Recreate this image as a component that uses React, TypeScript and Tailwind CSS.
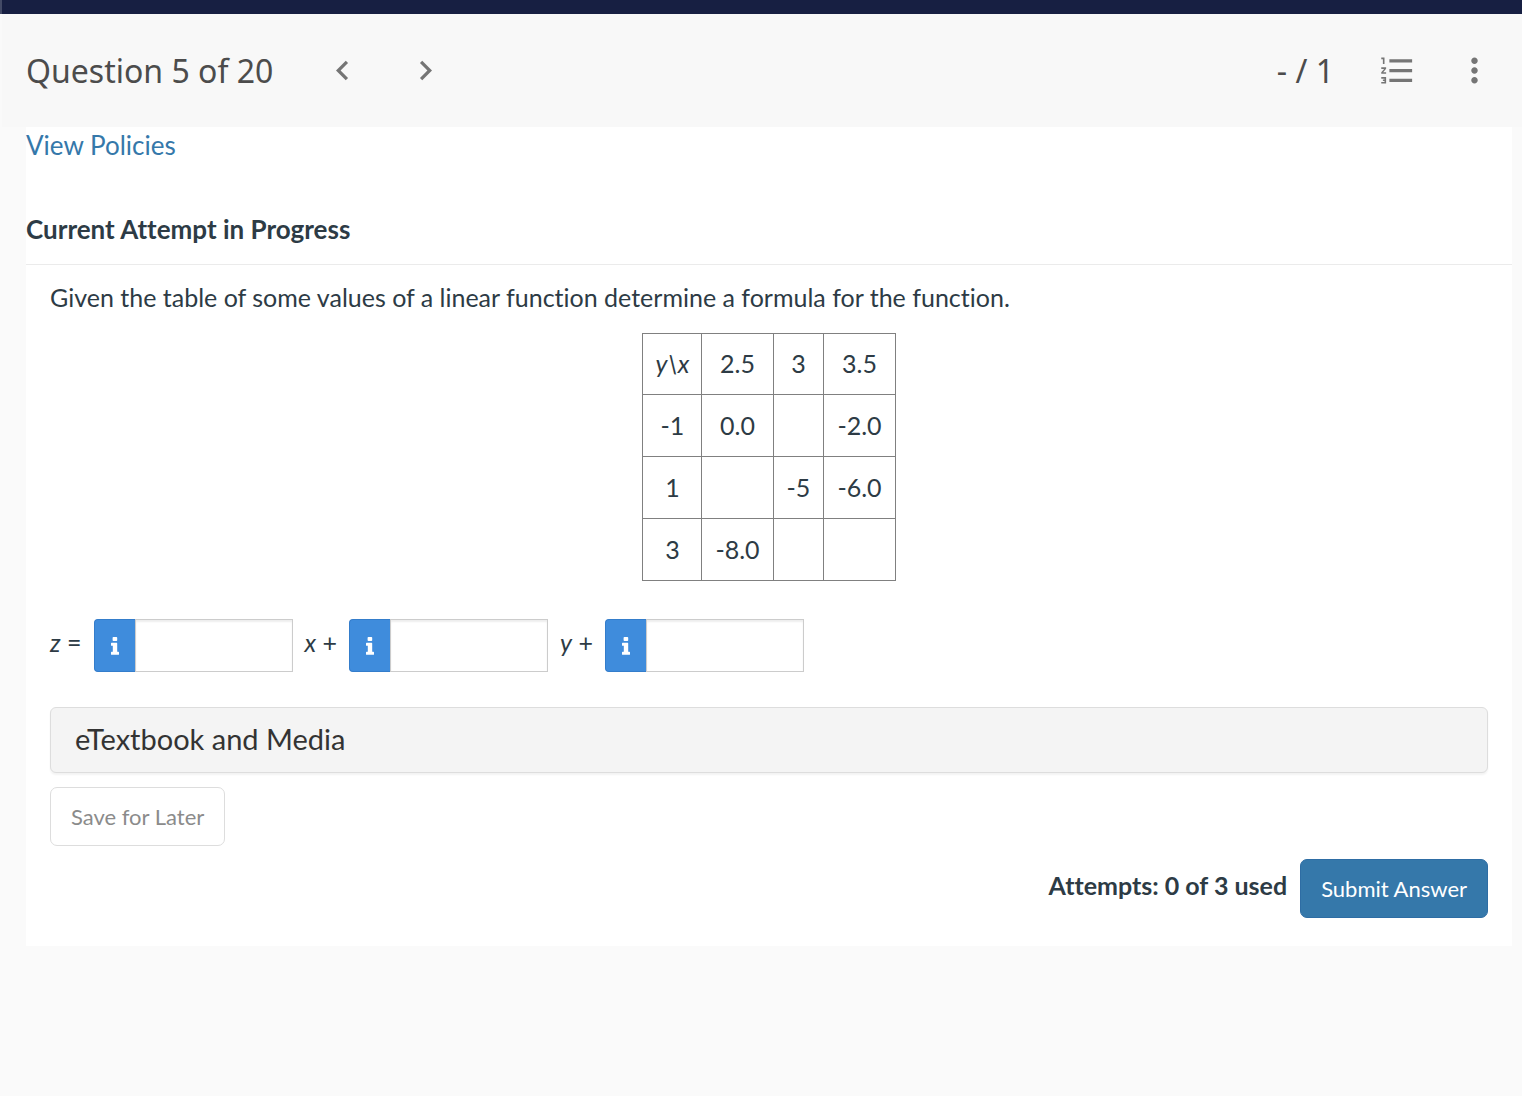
import React from 'react';

type Cell = string | null;

const columns = ['2.5', '3', '3.5'];

const rows: { y: string; values: Cell[] }[] = [
  { y: '-1', values: ['0.0', null, '-2.0'] },
  { y: '1', values: [null, '-5', '-6.0'] },
  { y: '3', values: ['-8.0', null, null] },
];

const Icon: React.FC<{ path: string }> = ({ path }) => (
  <svg className="size-[39px] fill-[#757575]" viewBox="0 0 24 24" aria-hidden="true">
    <path d={path} />
  </svg>
);

const QuestionHeader = () => (
  <header className="flex h-[113px] items-center justify-between border-l-2 border-[#fafafa] bg-[#f8f8f8] pl-6 pr-7 font-['Noto_Sans',sans-serif] text-[32px] leading-10 text-[#4c4c4c]">
    <div className="flex items-center">
      <h1>Question 5 of 20</h1>
      <nav className="ml-[50px] flex gap-11">
        <button type="button" aria-label="Previous question">
          <Icon path="M15.41 7.41L14 6l-6 6 6 6 1.41-1.41L10.83 12z" />
        </button>
        <button type="button" aria-label="Next question">
          <Icon path="M10 6L8.59 7.41 13.17 12l-4.58 4.59L10 18l6-6z" />
        </button>
      </nav>
    </div>
    <div className="flex items-center">
      <span>- / 1</span>
      <button type="button" aria-label="Question list" className="ml-11">
        <Icon path="M2 17h2v.5H3v1h1v.5H2v1h3v-4H2v1zm1-9h1V4H2v1h1v3zm-1 3h1.8L2 13.1v.9h3v-1H3.2L5 10.9V10H2v1zm5-6v2h14V5H7zm0 14h14v-2H7v2zm0-6h14v-2H7v2z" />
      </button>
      <button type="button" aria-label="More options" className="ml-[38px]">
        <Icon path="M12 8c1.1 0 2-.9 2-2s-.9-2-2-2-2 .9-2 2 .9 2 2 2zm0 2c-1.1 0-2 .9-2 2s.9 2 2 2 2-.9 2-2-.9-2-2-2zm0 6c-1.1 0-2 .9-2 2s.9 2 2 2 2-.9 2-2-.9-2-2-2z" />
      </button>
    </div>
  </header>
);

const ValuesTable = () => (
  <table className="mx-auto mt-[18px] border-collapse text-center">
    <thead>
      <tr>
        <th className="h-[61px] border border-[#808080] px-3 pb-0.5 font-normal italic">y\x</th>
        {columns.map(x => (
          <th key={x} className="h-[61px] border border-[#808080] px-[13px] pb-0.5 font-normal">
            {x}
          </th>
        ))}
      </tr>
    </thead>
    <tbody>
      {rows.map(row => (
        <tr key={row.y}>
          <th className="h-[62px] border border-[#808080] px-[13px] pb-0.5 font-normal">{row.y}</th>
          {row.values.map((value, i) => (
            <td key={i} className="h-[62px] border border-[#808080] px-[13px] pb-0.5">
              {value}
            </td>
          ))}
        </tr>
      ))}
    </tbody>
  </table>
);

const AnswerInput: React.FC<{ label: string }> = ({ label }) => (
  <span className="flex h-[53px]">
    <button
      type="button"
      aria-label={`Hint for ${label}`}
      className="flex w-[41px] items-center justify-center rounded-l-[4px] border border-r-0 border-[#347dcb] bg-[#3f8cdc]"
    >
      <svg className="h-[18px] w-2 fill-white" viewBox="0 0 8 18" aria-hidden="true">
        <rect x="1.6" y="0" width="4.6" height="4" rx="0.8" />
        <path d="M0.6 5.8h5a.6.6 0 0 1 .6.6v8.4h1.2a.6.6 0 0 1 .6.6v1.8a.6.6 0 0 1-.6.6H.6a.6.6 0 0 1-.6-.6v-1.8a.6.6 0 0 1 .6-.6h1.2V8.8H.6a.6.6 0 0 1-.6-.6V6.4a.6.6 0 0 1 .6-.6z" />
      </svg>
    </button>
    <input
      type="text"
      aria-label={label}
      className="w-[158px] border border-[#cccccc] bg-white px-3 shadow-[inset_0_2px_2px_rgba(0,0,0,0.07)] outline-none"
    />
  </span>
);

const App: React.FC = () => {
  return (
    <div className="min-h-screen bg-[#fafafa] font-[Lato,sans-serif] text-[26px] leading-9 text-[#2d3b45] [font-variant-ligatures:none]">
      <div className="h-[14px] border-l-2 border-[#434a66] bg-[#171f42]" />
      <QuestionHeader />

      <main className="ml-[26px] mr-[10px] bg-white pb-7">
        <a href="#policies" className="block w-fit text-[#3578aa]">
          View Policies
        </a>
        <h2 className="mt-12 border-b border-[#ebebeb] pb-[17px] font-bold">Current Attempt in Progress</h2>

        <div className="px-6 pt-[14px] text-[25px]">
          <p>Given the table of some values of a linear function determine a formula for the function.</p>
          <ValuesTable />

          <div className="mt-[38px] flex items-center gap-3">
            <span className="pb-2"><i>z</i> =</span>
            <AnswerInput label="Coefficient of x" />
            <span className="pb-2"><i>x</i> +</span>
            <AnswerInput label="Coefficient of y" />
            <span className="pb-2"><i>y</i> +</span>
            <AnswerInput label="Constant term" />
          </div>

          <button
            type="button"
            className="mt-[35px] block h-[66px] w-full rounded-[6px] border border-[#dddddd] bg-[#f4f4f4] px-6 pb-0.5 text-left text-[29px] text-[#333333] shadow-[0_2px_2px_rgba(0,0,0,0.05)]"
          >
            eTextbook and Media
          </button>
          <button
            type="button"
            className="mt-[14px] block h-[59px] rounded-[7px] border border-[#dddddd] bg-white px-5 text-[22px] text-[#8b8b8b]"
          >
            Save for Later
          </button>

          <div className="mt-[13px] flex items-center justify-end gap-[13px]">
            <strong className="pb-2">Attempts: 0 of 3 used</strong>
            <button
              type="button"
              className="h-[59px] rounded-[7px] border border-[#2e6da4] bg-[#3578aa] px-5 text-[22px] text-white"
            >
              Submit Answer
            </button>
          </div>
        </div>
      </main>
    </div>
  );
};

export default App;
